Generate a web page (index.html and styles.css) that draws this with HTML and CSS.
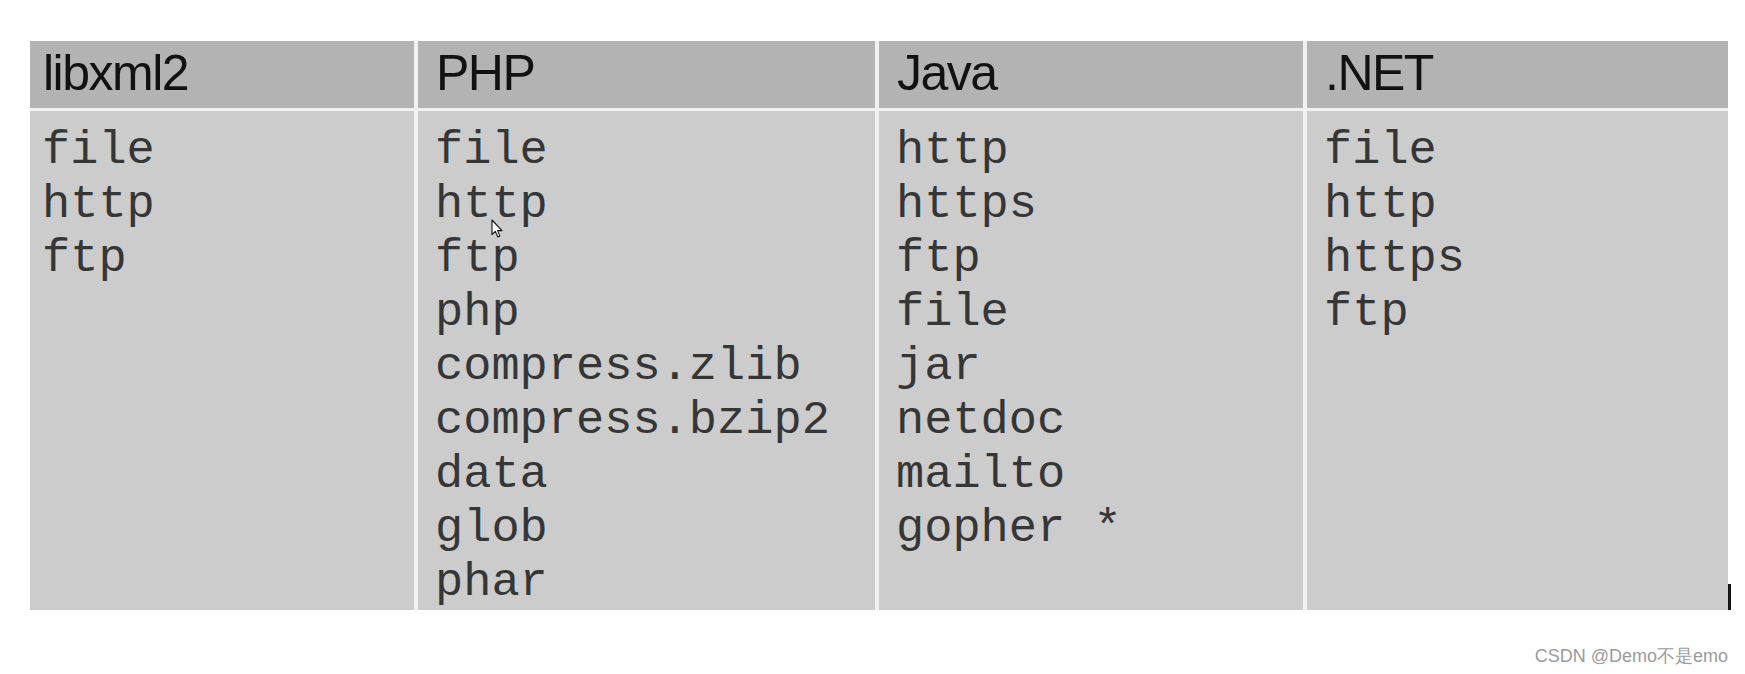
FILE: index.html
```html
<!DOCTYPE html>
<html lang="en">
<head>
    <meta charset="UTF-8">
    <title>URL schemes by parser</title>
    <link rel="stylesheet" href="styles.css">
</head>
<body>
    <div class="page">
        <div class="schemes">
            <div class="head first">libxml2</div>
            <div class="head">PHP</div>
            <div class="head">Java</div>
            <div class="head">.NET</div>

            <div class="cell first">
                <div>file</div>
                <div>http</div>
                <div>ftp</div>
            </div>
            <div class="cell">
                <div>file</div>
                <div>http</div>
                <div>ftp</div>
                <div>php</div>
                <div>compress.zlib</div>
                <div>compress.bzip2</div>
                <div>data</div>
                <div>glob</div>
                <div>phar</div>
            </div>
            <div class="cell">
                <div>http</div>
                <div>https</div>
                <div>ftp</div>
                <div>file</div>
                <div>jar</div>
                <div>netdoc</div>
                <div>mailto</div>
                <div>gopher *</div>
            </div>
            <div class="cell">
                <div>file</div>
                <div>http</div>
                <div>https</div>
                <div>ftp</div>
            </div>

            <span class="edge-mark"></span>
            <svg class="pointer" width="13" height="20" viewBox="0 0 13 20">
                <path d="M1 1 L1 15.5 L4.4 12.4 L6.8 18 L8.9 17.1 L6.6 11.6 L11 11.6 Z" fill="#fff" stroke="#111" stroke-width="1.1" stroke-linejoin="round"/>
            </svg>
        </div>

        <div class="credit">CSDN @Demo不是emo</div>
    </div>
</body>
</html>
```

FILE: styles.css
```css
body {
    margin: 0;
    background: #ffffff;
    font-family: "Liberation Sans", Arial, sans-serif;
}
.page {
    width: 1698px;
    padding: 41px 0 0 30px;
}
.schemes {
    position: relative;
    display: grid;
    grid-template-columns: 384px 457px 424px 421px;
    column-gap: 4px;
    row-gap: 3px;
    background: #f1f1f1;
}
.head {
    background: #b3b3b3;
    color: #121212;
    font-size: 50px;
    letter-spacing: -1.5px;
    line-height: 56px;
    padding: 4px 0 7px 18px;
}
.cell {
    background: #cccccc;
    color: #363636;
    font-family: "Liberation Mono", "Courier New", monospace;
    font-size: 47px;
    line-height: 54px;
    padding: 13px 0 0 17px;
}
.head.first {
    padding-left: 13px;
}
.cell.first {
    padding-left: 12px;
}
.edge-mark {
    position: absolute;
    right: -3px;
    bottom: 0;
    width: 3px;
    height: 26px;
    background: #151515;
}
.pointer {
    position: absolute;
    left: 461px;
    top: 178px;
}
.credit {
    margin-top: 35px;
    text-align: right;
    color: #9b9b9b;
    font-size: 18px;
    line-height: 22px;
}
```
